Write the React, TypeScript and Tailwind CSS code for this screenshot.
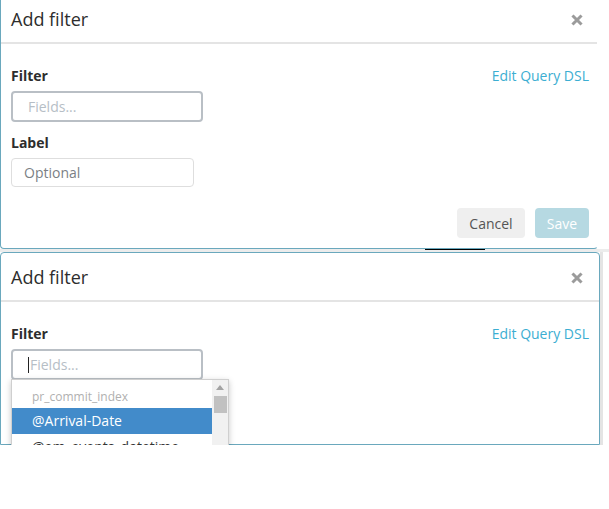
import React from "react";

function CloseIcon() {
  return (
    <svg width="12" height="12" viewBox="0 0 12 12" className="block">
      <path d="M2.5 2.5 L9.5 9.5 M9.5 2.5 L2.5 9.5" stroke="#9b9b9b" strokeWidth="3" strokeLinecap="square" fill="none" />
    </svg>
  );
}

function Header({ pr }: { pr: string }) {
  return (
    <div className={`h-[49px] shrink-0 border-b-2 border-[#e4e4e4] flex items-start justify-between pl-[10px] pt-[12px] ${pr}`}>
      <div className="text-[18px] leading-[24px] text-[#2d2d2d]">Add filter</div>
      <div className="mt-[7px]">
        <CloseIcon />
      </div>
    </div>
  );
}

function FilterRow() {
  return (
    <div className="flex justify-between text-[14px] leading-[20px]">
      <span className="font-bold text-[#2d2d2d]">Filter</span>
      <span className="text-[#3caed2]">Edit Query DSL</span>
    </div>
  );
}

export default function App() {
  return (
    <div className="w-[609px] h-[509px] bg-white overflow-hidden font-['Open_Sans',sans-serif]">
      <div className="h-[445px] overflow-hidden flex flex-col">
        {/* Panel 1 */}
        <div className="mt-[-6px] h-[255px] w-[598px] shrink-0 border border-[#6aa8bd] border-r-transparent rounded-[4px] bg-white flex flex-col">
          <Header pr="pr-[14px]" />
          <div className="pt-[22px] pl-[10px] pr-[8px] flex flex-col">
            <FilterRow />
            <div className="mt-[5px] h-[31px] w-[192px] border-2 border-[#b9bfc5] rounded-[4px] pl-[15px] flex items-center text-[14px] text-[#b6bec6]">
              Fields...
            </div>
            <div className="mt-[11px] text-[14px] leading-[20px] font-bold text-[#2d2d2d]">Label</div>
            <div className="mt-[5px] h-[29px] w-[183px] border border-[#dedede] rounded-[4px] pl-[12px] flex items-center text-[14px] text-[#7b7f85]">
              Optional
            </div>
            <div className="mt-[21px] flex justify-end gap-[10px]">
              <div className="w-[68px] h-[30px] rounded-[4px] bg-[#efefef] text-[#555555] text-[14px] flex items-center justify-center">
                Cancel
              </div>
              <div className="w-[54px] h-[30px] rounded-[4px] bg-[#b6d9e2] text-white text-[14px] flex items-center justify-center">
                Save
              </div>
            </div>
          </div>
        </div>

        {/* gap */}
        <div className="h-[3px] shrink-0 bg-[#ececec] pl-[425px]">
          <div className="w-[60px] h-[1px] bg-black" />
        </div>

        {/* Panel 2 */}
        <div className="flex flex-1 min-h-0">
          <div className="w-[600px] shrink-0 border border-[#6aa8bd] rounded-t-[4px] bg-white flex flex-col">
            <Header pr="pr-[16px]" />
            <div className="pt-[22px] pl-[10px] pr-[10px] flex flex-col">
              <FilterRow />
              <div className="relative mt-[5px] w-[192px]">
                <div className="h-[31px] w-[192px] border-2 border-[#b9bfc5] rounded-[4px] pl-[15px] flex items-center text-[14px] text-[#b6bec6]">
                  <span className="w-[1px] h-[16px] bg-[#222] mr-[1px]" />
                  Fields...
                </div>
                <div className="absolute left-0 top-[30px] w-[218px] h-[120px] bg-white border border-[#cfcfcf] shadow-[0_2px_6px_rgba(0,0,0,0.22)] flex">
                  <div className="flex-1 flex flex-col">
                    <div className="h-[28px] pt-[9px] pl-[20px] text-[12px] leading-[16px] text-[#b0b0b0]">pr_commit_index</div>
                    <div className="h-[26px] pl-[20px] text-[14px] leading-[26px] text-white bg-[#428bca]">@Arrival-Date</div>
                    <div className="h-[26px] pl-[20px] text-[14px] leading-[26px] text-[#333333]">@em_events_datetime</div>
                  </div>
                  <div className="w-[16px] bg-[#f1f1f1] flex flex-col items-center">
                    <svg width="8" height="5" viewBox="0 0 8 5" className="mt-[5px]">
                      <path d="M4 0 L8 5 L0 5 Z" fill="#a3a3a3" />
                    </svg>
                    <div className="mt-[6px] w-[13px] h-[17px] bg-[#c1c1c1]" />
                  </div>
                </div>
              </div>
            </div>
          </div>
          <div className="w-[3px] bg-[#e4e4e4]" />
        </div>
      </div>
    </div>
  );
}
